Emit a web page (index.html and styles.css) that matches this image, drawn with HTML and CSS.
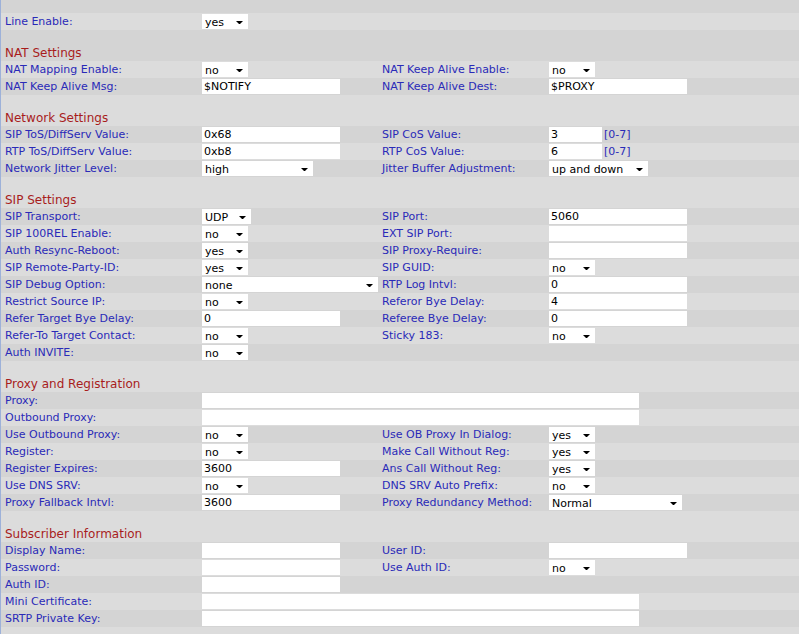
FILE: index.html
```html
<!DOCTYPE html>
<html lang="en">
<head>
  <meta charset="UTF-8" />
  <title>Line Settings</title>
  <link rel="stylesheet" href="styles.css">
</head>
<body>
  <table class="cfg">
    <colgroup>
      <col class="c1"><col class="c2"><col class="c3"><col class="c4">
    </colgroup>
    <tr class="top"><td colspan="4"></td></tr>
    <tr>
      <td class="lbl">Line Enable:</td>
      <td><span class="sel"><select><option>yes</option></select></span></td>
      <td></td><td></td>
    </tr>

    <tr class="head"><td colspan="4">NAT Settings</td></tr>
    <tr>
      <td class="lbl">NAT Mapping Enable:</td>
      <td><span class="sel"><select><option>no</option></select></span></td>
      <td class="lbl2">NAT Keep Alive Enable:</td>
      <td><span class="sel"><select><option>no</option></select></span></td>
    </tr>
    <tr>
      <td class="lbl">NAT Keep Alive Msg:</td>
      <td><input class="txt" type="text" value="$NOTIFY"></td>
      <td class="lbl2">NAT Keep Alive Dest:</td>
      <td><input class="txt" type="text" value="$PROXY"></td>
    </tr>

    <tr class="head"><td colspan="4">Network Settings</td></tr>
    <tr>
      <td class="lbl">SIP ToS/DiffServ Value:</td>
      <td><input class="txt" type="text" value="0x68"></td>
      <td class="lbl2">SIP CoS Value:</td>
      <td><div class="cos"><input class="txt short" type="text" value="3"><span>[0-7]</span></div></td>
    </tr>
    <tr>
      <td class="lbl">RTP ToS/DiffServ Value:</td>
      <td><input class="txt" type="text" value="0xb8"></td>
      <td class="lbl2">RTP CoS Value:</td>
      <td><div class="cos"><input class="txt short" type="text" value="6"><span>[0-7]</span></div></td>
    </tr>
    <tr>
      <td class="lbl">Network Jitter Level:</td>
      <td><span class="sel w111"><select><option>high</option></select></span></td>
      <td class="lbl2">Jitter Buffer Adjustment:</td>
      <td><span class="sel w99"><select><option>up and down</option></select></span></td>
    </tr>

    <tr class="head"><td colspan="4">SIP Settings</td></tr>
    <tr>
      <td class="lbl">SIP Transport:</td>
      <td><span class="sel w49"><select><option>UDP</option></select></span></td>
      <td class="lbl2">SIP Port:</td>
      <td><input class="txt" type="text" value="5060"></td>
    </tr>
    <tr>
      <td class="lbl">SIP 100REL Enable:</td>
      <td><span class="sel"><select><option>no</option></select></span></td>
      <td class="lbl2">EXT SIP Port:</td>
      <td><input class="txt" type="text" value=""></td>
    </tr>
    <tr>
      <td class="lbl">Auth Resync-Reboot:</td>
      <td><span class="sel"><select><option>yes</option></select></span></td>
      <td class="lbl2">SIP Proxy-Require:</td>
      <td><input class="txt" type="text" value=""></td>
    </tr>
    <tr>
      <td class="lbl">SIP Remote-Party-ID:</td>
      <td><span class="sel"><select><option>yes</option></select></span></td>
      <td class="lbl2">SIP GUID:</td>
      <td><span class="sel"><select><option>no</option></select></span></td>
    </tr>
    <tr>
      <td class="lbl">SIP Debug Option:</td>
      <td><span class="sel w176"><select><option>none</option></select></span></td>
      <td class="lbl2">RTP Log Intvl:</td>
      <td><input class="txt" type="text" value="0"></td>
    </tr>
    <tr>
      <td class="lbl">Restrict Source IP:</td>
      <td><span class="sel"><select><option>no</option></select></span></td>
      <td class="lbl2">Referor Bye Delay:</td>
      <td><input class="txt" type="text" value="4"></td>
    </tr>
    <tr>
      <td class="lbl">Refer Target Bye Delay:</td>
      <td><input class="txt" type="text" value="0"></td>
      <td class="lbl2">Referee Bye Delay:</td>
      <td><input class="txt" type="text" value="0"></td>
    </tr>
    <tr>
      <td class="lbl">Refer-To Target Contact:</td>
      <td><span class="sel"><select><option>no</option></select></span></td>
      <td class="lbl2">Sticky 183:</td>
      <td><span class="sel"><select><option>no</option></select></span></td>
    </tr>
    <tr>
      <td class="lbl">Auth INVITE:</td>
      <td><span class="sel"><select><option>no</option></select></span></td>
      <td></td><td></td>
    </tr>

    <tr class="head"><td colspan="4">Proxy and Registration</td></tr>
    <tr>
      <td class="lbl">Proxy:</td>
      <td colspan="3"><input class="txt wide" type="text" value=""></td>
    </tr>
    <tr>
      <td class="lbl">Outbound Proxy:</td>
      <td colspan="3"><input class="txt wide" type="text" value=""></td>
    </tr>
    <tr>
      <td class="lbl">Use Outbound Proxy:</td>
      <td><span class="sel"><select><option>no</option></select></span></td>
      <td class="lbl2">Use OB Proxy In Dialog:</td>
      <td><span class="sel"><select><option>yes</option></select></span></td>
    </tr>
    <tr>
      <td class="lbl">Register:</td>
      <td><span class="sel"><select><option>no</option></select></span></td>
      <td class="lbl2">Make Call Without Reg:</td>
      <td><span class="sel"><select><option>yes</option></select></span></td>
    </tr>
    <tr>
      <td class="lbl">Register Expires:</td>
      <td><input class="txt" type="text" value="3600"></td>
      <td class="lbl2">Ans Call Without Reg:</td>
      <td><span class="sel"><select><option>yes</option></select></span></td>
    </tr>
    <tr>
      <td class="lbl">Use DNS SRV:</td>
      <td><span class="sel"><select><option>no</option></select></span></td>
      <td class="lbl2">DNS SRV Auto Prefix:</td>
      <td><span class="sel"><select><option>no</option></select></span></td>
    </tr>
    <tr>
      <td class="lbl">Proxy Fallback Intvl:</td>
      <td><input class="txt" type="text" value="3600"></td>
      <td class="lbl2">Proxy Redundancy Method:</td>
      <td><span class="sel w133"><select><option>Normal</option></select></span></td>
    </tr>

    <tr class="head"><td colspan="4">Subscriber Information</td></tr>
    <tr>
      <td class="lbl">Display Name:</td>
      <td><input class="txt" type="text" value=""></td>
      <td class="lbl2">User ID:</td>
      <td><input class="txt" type="text" value=""></td>
    </tr>
    <tr>
      <td class="lbl">Password:</td>
      <td><input class="txt" type="text" value=""></td>
      <td class="lbl2">Use Auth ID:</td>
      <td><span class="sel"><select><option>no</option></select></span></td>
    </tr>
    <tr>
      <td class="lbl">Auth ID:</td>
      <td><input class="txt" type="text" value=""></td>
      <td></td><td></td>
    </tr>
    <tr>
      <td class="lbl">Mini Certificate:</td>
      <td colspan="3"><input class="txt wide" type="text" value=""></td>
    </tr>
    <tr>
      <td class="lbl">SRTP Private Key:</td>
      <td colspan="3"><input class="txt wide" type="text" value=""></td>
    </tr>
  </table>
</body>
</html>
```

FILE: styles.css
```css
* {
  box-sizing: border-box;
}
html {
  background: #dcdcdc;
}
body {
  margin: 0;
  min-height: 100vh;
  background: #dcdcdc;
  border-left: 1px solid #9db1d9;
  font-family: "DejaVu Sans", Verdana, sans-serif;
  font-size: 11px;
}
.cfg {
  width: 100%;
  border-collapse: collapse;
  table-layout: fixed;
}
.cfg .c1 { width: 201px; }
.cfg .c2 { width: 180px; }
.cfg .c3 { width: 167px; }
.cfg tr:nth-child(odd) {
  background: #d4d4d4;
}
.cfg td {
  padding: 0;
  height: 17px;
  line-height: 17px;
  white-space: nowrap;
  color: #2a2ab8;
}
.cfg td.lbl {
  padding-left: 4px;
}
.cfg tr.top td {
  height: 13px;
}
.cfg tr.head td {
  height: 31px;
  padding-left: 4px;
  vertical-align: bottom;
  line-height: 15px;
  font-size: 12px;
  color: #a81c1c;
}
.txt {
  display: block;
  width: 138px;
  height: 15px;
  margin: 1px 0;
  padding: 0 2px;
  border: 0;
  outline: none;
  background: #fff;
  font: inherit;
  color: #000;
}
.txt.short { width: 53px; }
.txt.wide { width: 437px; }
.cos {
  display: flex;
  align-items: center;
  gap: 2px;
}
.sel {
  position: relative;
  display: block;
  width: 46px;
  height: 15px;
  margin: 1px 0;
  background: #fff;
}
.sel.w49 { width: 49px; }
.sel.w99 { width: 99px; }
.sel.w111 { width: 111px; }
.sel.w133 { width: 133px; }
.sel.w176 { width: 176px; }
.sel select {
  -webkit-appearance: none;
  appearance: none;
  display: block;
  width: 100%;
  height: 15px;
  margin: 0;
  padding: 0 0 0 3px;
  border: 0;
  outline: none;
  background: transparent;
  font: inherit;
  color: #000;
}
.sel::after {
  content: "";
  position: absolute;
  right: 5px;
  top: 7px;
  width: 1px;
  border-left: 3px solid transparent;
  border-right: 3px solid transparent;
  border-top: 3px solid #000;
  pointer-events: none;
}
```
